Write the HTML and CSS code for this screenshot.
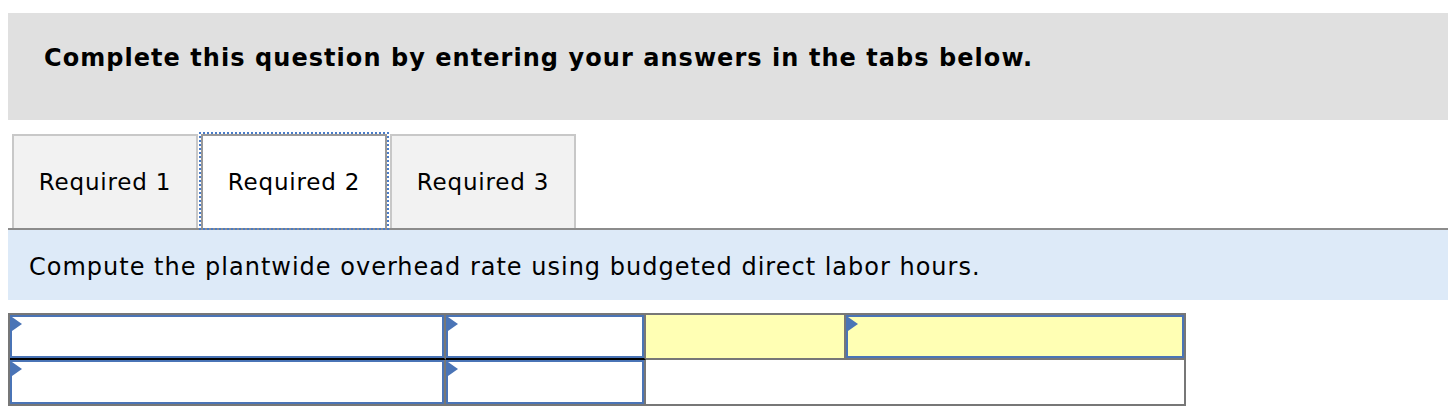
FILE: index.html
```html
<!DOCTYPE html>
<html lang="en">
<head>
    <meta charset="UTF-8">
    <meta name="viewport" content="width=device-width, initial-scale=1.0">
    <title>Required 2</title>
    <link rel="stylesheet" href="styles.css">
</head>
<body>
    <div class="page">
        <div class="prompt">
            <h2>Complete this question by entering your answers in the tabs below.</h2>
        </div>

        <div class="tabs">
            <button class="tab">Required 1</button>
            <button class="tab active">Required 2</button>
            <button class="tab">Required 3</button>
        </div>

        <div class="instructions">Compute the plantwide overhead rate using budgeted direct labor hours.</div>

        <div class="answer-grid">
            <div class="cell underline"><div class="entry"></div></div>
            <div class="cell underline"><div class="entry"></div></div>
            <div class="cell shaded"></div>
            <div class="cell shaded last"><div class="entry"></div></div>

            <div class="cell bottom"><div class="entry"></div></div>
            <div class="cell bottom"><div class="entry"></div></div>
            <div class="cell bottom last wide"></div>
        </div>
    </div>
</body>
</html>
```

FILE: styles.css
```css
body {
    margin: 0;
    font-family: "DejaVu Sans", Verdana, sans-serif;
    color: #000;
    background: #fff;
}
.page {
    padding: 13px 0 0 8px;
}
.prompt {
    background: #e0e0e0;
    height: 107px;
    box-sizing: border-box;
    padding: 31px 0 0 36px;
}
.prompt h2 {
    margin: 0;
    font-size: 24px;
    font-weight: bold;
    line-height: 28px;
    letter-spacing: 1.05px;
}
.tabs {
    display: flex;
    align-items: flex-end;
    margin-top: 14px;
    padding-left: 4px;
    border-bottom: 2px solid #8c8c8c;
}
.tab {
    width: 186px;
    height: 94px;
    margin-right: 3px;
    background: #f2f2f2;
    border: 2px solid #c8c8c8;
    border-bottom: none;
    font-family: "DejaVu Sans", Verdana, sans-serif;
    font-size: 23px;
    letter-spacing: 0.8px;
    color: #000;
    padding: 0;
    cursor: pointer;
}
.tab.active {
    background: #fff;
    border-color: #999;
    outline: 2px dotted #4a7cc8;
    outline-offset: 0;
}
.instructions {
    background: #ddeaf8;
    height: 70px;
    line-height: 74px;
    padding-left: 21px;
    font-size: 24px;
    letter-spacing: 1px;
}
.answer-grid {
    display: grid;
    grid-template-columns: 436px 200px 200px 338px;
    grid-template-rows: 45px 44px;
    width: fit-content;
    margin-top: 13px;
    border: 2px solid #777;
}
.cell {
    position: relative;
    background: #fff;
    border-right: 2px solid #777;
    border-bottom: 2px solid #777;
}
.cell.last { border-right: none; }
.cell.bottom { border-bottom: none; }
.cell.underline { border-bottom-color: #000; }
.cell.shaded { background: #ffffb4; }
.cell.wide { grid-column: span 2; }
.entry {
    height: 100%;
    box-sizing: border-box;
    border: 2px solid #4a74b6;
    position: relative;
}
.entry::before {
    content: "";
    position: absolute;
    top: 0;
    left: 0;
    border-left: 10px solid #4a74b6;
    border-top: 7px solid transparent;
    border-bottom: 7px solid transparent;
}
```
